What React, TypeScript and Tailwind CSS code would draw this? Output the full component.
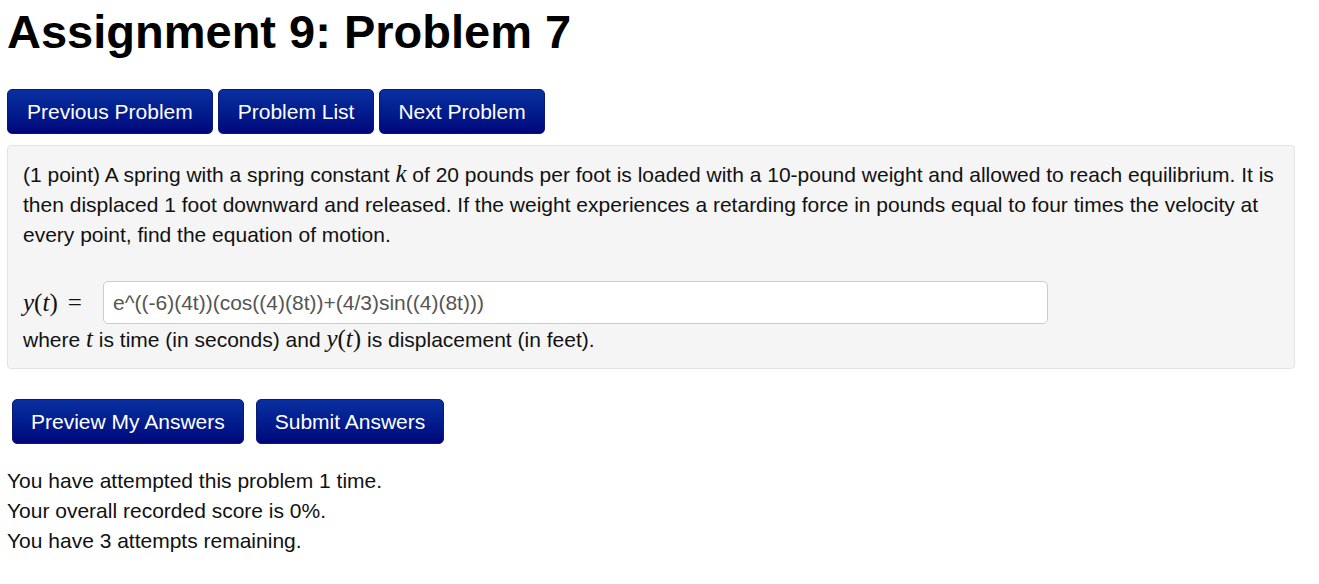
import React from 'react';

const navBtn =
  'rounded-[5px] border border-[#0a1a70] bg-gradient-to-b from-[#0b2fa0] to-[#00057c] h-[45px] text-[21px] leading-none text-white';

const M: React.FC<{ children: React.ReactNode }> = ({ children }) => (
  <span className="font-['Liberation_Serif',serif] italic text-[25px] leading-none">{children}</span>
);

const Yt: React.FC = () => (
  <span className="font-['Liberation_Serif',serif] text-[25px] leading-none">
    <i>y</i>(<i>t</i>)
  </span>
);

const App: React.FC = () => {
  return (
    <div className="min-h-[584px] bg-white px-[7px] font-['Liberation_Sans',Arial,sans-serif] text-[#111]">
      <h1 className="pt-[4px] text-[47px] font-bold leading-[56px] text-black">Assignment 9: Problem 7</h1>

      <div className="mt-[29px] flex gap-[5px]">
        <button className={navBtn + ' px-[19px]'}>Previous Problem</button>
        <button className={navBtn + ' px-[19px]'}>Problem List</button>
        <button className={navBtn + ' px-[18px]'}>Next Problem</button>
      </div>

      <div className="mt-[11px] w-[1288px] rounded-[4px] border border-[#e3e3e3] bg-[#f5f5f5] px-[15px] pb-[13px] pt-[14px] text-[21px] leading-[30px]">
        <p>
          (1 point) A spring with a spring constant <M>k</M> of 20 pounds per foot is loaded with a 10-pound weight and
          allowed to reach equilibrium. It is then displaced 1 foot downward and released. If the weight experiences a
          retarding force in pounds equal to four times the velocity at every point, find the equation of motion.
        </p>
        <div className="mt-[31px] flex items-center">
          <span className="flex w-[80px] items-center gap-[10px] font-['Liberation_Serif',serif] text-[25px]">
            <span>
              <i>y</i>(<i>t</i>)
            </span>
            <span>=</span>
          </span>
          <div className="flex h-[43px] w-[945px] items-center rounded-[5px] border border-[#cccccc] bg-white px-[9px] text-[21px] text-[#555]">
            e^((-6)(4t))(cos((4)(8t))+(4/3)sin((4)(8t)))
          </div>
        </div>
        <p className="mt-[1px]">
          where <M>t</M> is time (in seconds) and <Yt /> is displacement (in feet).
        </p>
      </div>

      <div className="ml-[5px] mt-[30px] flex gap-[12px]">
        <button className={navBtn + ' px-[18px]'}>Preview My Answers</button>
        <button className={navBtn + ' px-[18px]'}>Submit Answers</button>
      </div>

      <div className="mt-[22px] text-[21px] leading-[30px]">
        <p>You have attempted this problem 1 time.</p>
        <p>Your overall recorded score is 0%.</p>
        <p>You have 3 attempts remaining.</p>
      </div>
    </div>
  );
};

export default App;
